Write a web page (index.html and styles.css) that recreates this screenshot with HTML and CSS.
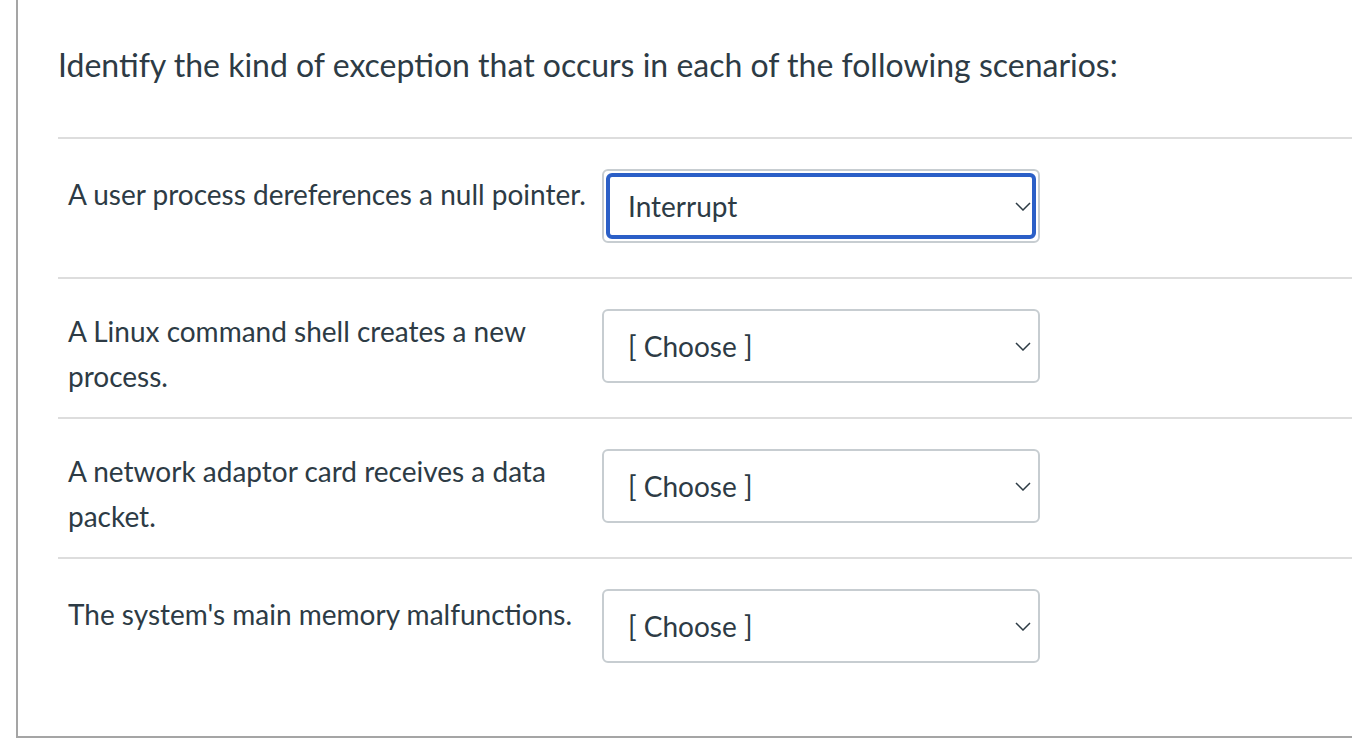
FILE: index.html
```html
<!DOCTYPE html>
<html lang="en">
<head>
    <meta charset="UTF-8">
    <meta name="viewport" content="width=device-width, initial-scale=1.0">
    <title>Quiz Question</title>
    <link rel="stylesheet" href="styles.css">
</head>
<body>
    <div class="question">
        <h2 class="question-text">Identify the kind of exception that occurs in each of the following scenarios:</h2>

        <div class="answer-row">
            <label class="answer-label single-line" for="q1">A user process dereferences a null pointer.</label>
            <div class="select-wrap focused">
                <select id="q1" class="answer-select">
                    <option>[ Choose ]</option>
                    <option selected>Interrupt</option>
                    <option>Trap</option>
                    <option>Fault</option>
                </select>
                <svg class="chevron" width="16" height="9" viewBox="0 0 16 9"><path d="M1 1 L8 8 L15 1" fill="none" stroke="#2d3b45" stroke-width="1.5"/></svg>
            </div>
        </div>

        <div class="answer-row">
            <label class="answer-label" for="q2">A Linux command shell creates a new process.</label>
            <div class="select-wrap">
                <select id="q2" class="answer-select">
                    <option selected>[ Choose ]</option>
                    <option>Interrupt</option>
                    <option>Trap</option>
                    <option>Fault</option>
                </select>
                <svg class="chevron" width="16" height="9" viewBox="0 0 16 9"><path d="M1 1 L8 8 L15 1" fill="none" stroke="#2d3b45" stroke-width="1.5"/></svg>
            </div>
        </div>

        <div class="answer-row">
            <label class="answer-label" for="q3">A network adaptor card receives a data packet.</label>
            <div class="select-wrap">
                <select id="q3" class="answer-select">
                    <option selected>[ Choose ]</option>
                    <option>Interrupt</option>
                    <option>Trap</option>
                    <option>Fault</option>
                </select>
                <svg class="chevron" width="16" height="9" viewBox="0 0 16 9"><path d="M1 1 L8 8 L15 1" fill="none" stroke="#2d3b45" stroke-width="1.5"/></svg>
            </div>
        </div>

        <div class="answer-row">
            <label class="answer-label single-line" for="q4">The system's main memory malfunctions.</label>
            <div class="select-wrap">
                <select id="q4" class="answer-select">
                    <option selected>[ Choose ]</option>
                    <option>Interrupt</option>
                    <option>Trap</option>
                    <option>Fault</option>
                </select>
                <svg class="chevron" width="16" height="9" viewBox="0 0 16 9"><path d="M1 1 L8 8 L15 1" fill="none" stroke="#2d3b45" stroke-width="1.5"/></svg>
            </div>
        </div>
    </div>
</body>
</html>
```

FILE: styles.css
```css
body {
    margin: 0;
    font-family: Lato, "Open Sans", sans-serif;
    color: #2d3b45;
    background: #fff;
    overflow: hidden;
}
.question {
    margin-left: 16px;
    height: 690px;
    border-left: 2px solid #a5a5a5;
    border-bottom: 2px solid #a5a5a5;
    padding: 46px 0 0 40px;
}
.question-text {
    margin: 0 0 53px;
    font-size: 32px;
    font-weight: normal;
    line-height: 38px;
}
.answer-row {
    display: flex;
    align-items: flex-start;
    height: 140px;
    padding: 30px 10px 0;
    border-top: 2px solid #ddd;
    box-sizing: border-box;
}
.answer-label {
    width: 534px;
    font-size: 28px;
    line-height: 45px;
    padding-right: 10px;
    box-sizing: border-box;
}
.single-line {
    padding-top: 3px;
}
.select-wrap {
    position: relative;
    width: 438px;
    height: 74px;
}
.answer-select {
    appearance: none;
    -webkit-appearance: none;
    width: 100%;
    height: 100%;
    border: 2px solid #c7cdd1;
    border-radius: 6px;
    background: #fff;
    padding: 0 40px 0 24px;
    font-family: Lato, "Open Sans", sans-serif;
    font-size: 28px;
    color: #2d3b45;
    outline: none;
}
/* focus ring drawn over the select */
.focused::after {
    content: "";
    position: absolute;
    top: 4px;
    left: 4px;
    right: 4px;
    bottom: 4px;
    border: 4px solid #2b5fc7;
    border-radius: 6px;
    pointer-events: none;
}
.chevron {
    position: absolute;
    right: 9px;
    top: 33px;
    pointer-events: none;
}
```
